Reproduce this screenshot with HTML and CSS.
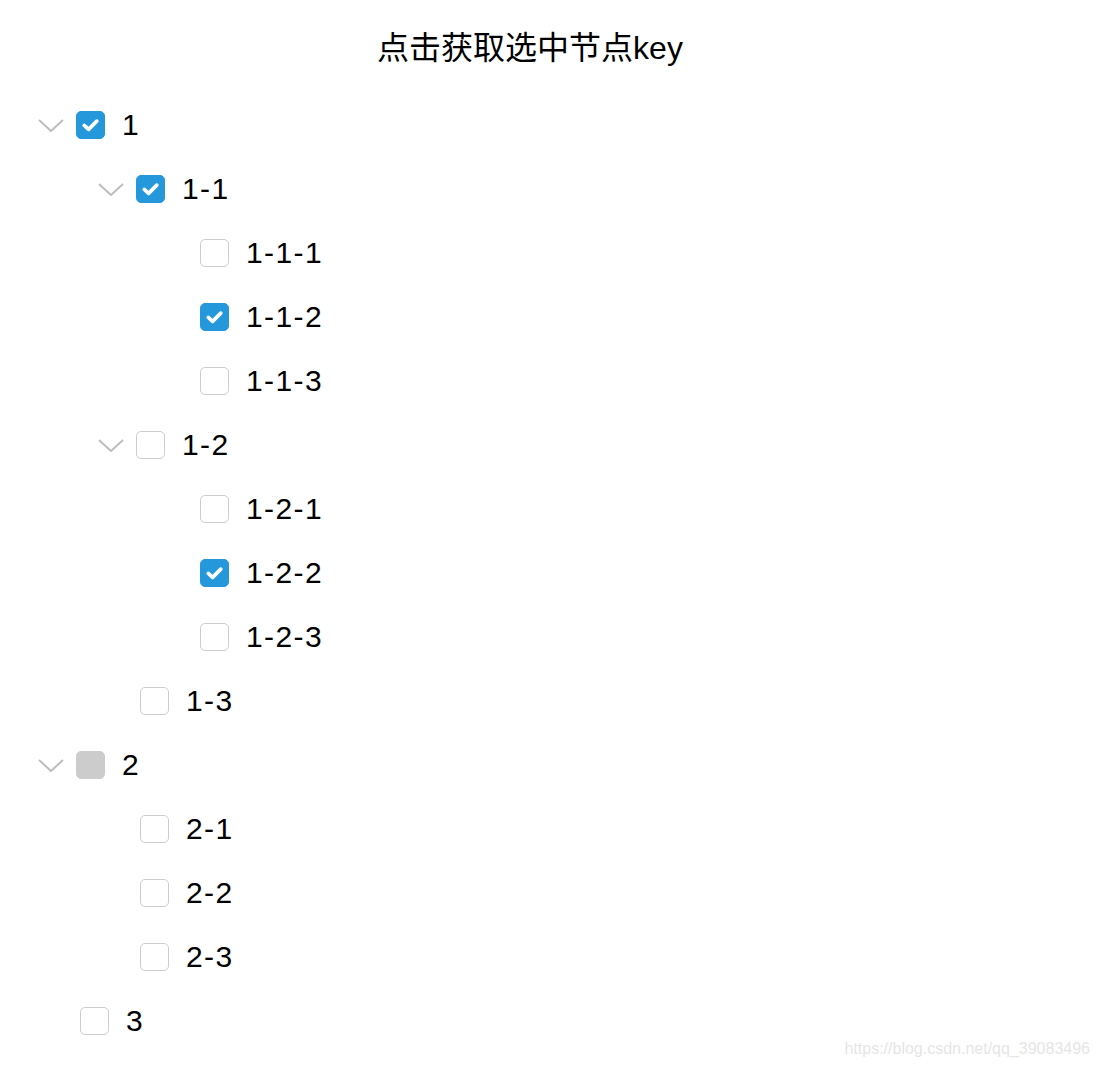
FILE: index.html
```html
<!DOCTYPE html>
<html lang="zh">
<head>
<meta charset="utf-8">
<title>tree</title>
<link rel="stylesheet" href="styles.css">
</head>
<body>
<div class="page">
  <h1 class="title">点击获取选中节点key</h1>
  <div class="tree">
    <div class="row lv0">
      <svg class="arrow" viewBox="0 0 26 13"><polyline points="1,1 13,12 25,1"/></svg>
      <span class="cb checked"><svg viewBox="0 0 28 28"><polyline points="7.5,14.5 12,18.5 20.5,10"/></svg></span>
      <span class="label">1</span>
    </div>
    <div class="row lv1">
      <svg class="arrow" viewBox="0 0 26 13"><polyline points="1,1 13,12 25,1"/></svg>
      <span class="cb checked"><svg viewBox="0 0 28 28"><polyline points="7.5,14.5 12,18.5 20.5,10"/></svg></span>
      <span class="label">1-1</span>
    </div>
    <div class="row lv2 leaf">
      <span class="spacer"></span>
      <span class="cb"></span>
      <span class="label">1-1-1</span>
    </div>
    <div class="row lv2 leaf">
      <span class="spacer"></span>
      <span class="cb checked"><svg viewBox="0 0 28 28"><polyline points="7.5,14.5 12,18.5 20.5,10"/></svg></span>
      <span class="label">1-1-2</span>
    </div>
    <div class="row lv2 leaf">
      <span class="spacer"></span>
      <span class="cb"></span>
      <span class="label">1-1-3</span>
    </div>
    <div class="row lv1">
      <svg class="arrow" viewBox="0 0 26 13"><polyline points="1,1 13,12 25,1"/></svg>
      <span class="cb"></span>
      <span class="label">1-2</span>
    </div>
    <div class="row lv2 leaf">
      <span class="spacer"></span>
      <span class="cb"></span>
      <span class="label">1-2-1</span>
    </div>
    <div class="row lv2 leaf">
      <span class="spacer"></span>
      <span class="cb checked"><svg viewBox="0 0 28 28"><polyline points="7.5,14.5 12,18.5 20.5,10"/></svg></span>
      <span class="label">1-2-2</span>
    </div>
    <div class="row lv2 leaf">
      <span class="spacer"></span>
      <span class="cb"></span>
      <span class="label">1-2-3</span>
    </div>
    <div class="row lv1 leaf">
      <span class="spacer"></span>
      <span class="cb"></span>
      <span class="label">1-3</span>
    </div>
    <div class="row lv0">
      <svg class="arrow" viewBox="0 0 26 13"><polyline points="1,1 13,12 25,1"/></svg>
      <span class="cb disabled"></span>
      <span class="label">2</span>
    </div>
    <div class="row lv1 leaf">
      <span class="spacer"></span>
      <span class="cb"></span>
      <span class="label">2-1</span>
    </div>
    <div class="row lv1 leaf">
      <span class="spacer"></span>
      <span class="cb"></span>
      <span class="label">2-2</span>
    </div>
    <div class="row lv1 leaf">
      <span class="spacer"></span>
      <span class="cb"></span>
      <span class="label">2-3</span>
    </div>
    <div class="row lv0 leaf">
      <span class="spacer"></span>
      <span class="cb"></span>
      <span class="label">3</span>
    </div>
  </div>
  <div class="watermark">https://blog.csdn.net/qq_39083496</div>
</div>
</body>
</html>
```

FILE: styles.css
```css
html, body {
  margin: 0;
  padding: 0;
  background: #ffffff;
}

.page {
  position: relative;
  width: 1100px;
  height: 1066px;
  overflow: hidden;
  font-family: "Liberation Sans", Arial, "Noto Sans CJK SC", sans-serif;
  color: #000;
}

.title {
  width: 1060px;
  margin: 28px 0 25px 0;
  height: 40px;
  line-height: 40px;
  text-align: center;
  font-size: 32px;
  font-weight: normal;
  font-family: "Liberation Sans", "Noto Sans CJK SC", sans-serif;
}

.tree {
  display: flex;
  flex-direction: column;
}

.row {
  display: flex;
  align-items: center;
  height: 64px;
}

.lv0 { padding-left: 38px; }
.lv1 { padding-left: 98px; }
.lv2 { padding-left: 158px; }

.arrow {
  width: 26px;
  height: 13px;
  margin-right: 12px;
  flex: none;
}

.arrow polyline {
  fill: none;
  stroke: #bdbdbd;
  stroke-width: 2;
}

.spacer {
  width: 30px;
  margin-right: 12px;
  flex: none;
}

.cb {
  box-sizing: border-box;
  width: 29px;
  height: 28px;
  border: 1px solid #cdcdcd;
  border-radius: 5px;
  background: #fff;
  margin-right: 17px;
  flex: none;
  display: flex;
  align-items: center;
  justify-content: center;
}

.cb svg {
  width: 28px;
  height: 28px;
}

.cb svg polyline {
  fill: none;
  stroke: #ffffff;
  stroke-width: 3.8;
  stroke-linecap: round;
  stroke-linejoin: round;
}

.cb.checked {
  background: #2598dc;
  border-color: #2598dc;
}

.cb.disabled {
  background: #cccccc;
  border-color: #cccccc;
}

.label {
  font-size: 30px;
  letter-spacing: 1.4px;
  line-height: 32px;
}

.watermark {
  position: absolute;
  right: 10px;
  bottom: 8px;
  font-size: 16px;
  color: #e6e6e6;
  font-family: "Liberation Sans", Arial, sans-serif;
}
```
